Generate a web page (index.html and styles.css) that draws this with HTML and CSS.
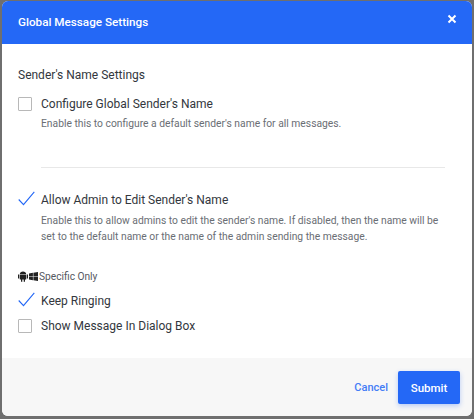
FILE: index.html
```html
<!DOCTYPE html>
<html lang="en">
<head>
<meta charset="utf-8">
<title>Global Message Settings</title>
<link rel="stylesheet" href="styles.css">
</head>
<body>
<div class="dialog">
  <header class="head">
    <h1 class="title">Global Message Settings</h1>
    <svg class="close" viewBox="0 0 10 10" width="10" height="10"><path d="M1.500 1.500l7 7M8.500 1.500l-7 7" stroke="#fff" stroke-width="2"/></svg>
  </header>
  <main class="body">
    <h2 class="section">Sender's Name Settings</h2>
    <div class="row row-first">
      <span class="box"></span>
      <span class="label">Configure Global Sender's Name</span>
    </div>
    <p class="desc d1">Enable this to configure a default sender's name for all messages.</p>
    <hr class="rule">
    <div class="row">
      <svg class="check" viewBox="0 0 17 15" width="17" height="15"><path d="M0.700 8.500L5.500 13.600L16.300 0.800" fill="none" stroke="#2468f6" stroke-width="1.100"/></svg>
      <span class="label">Allow Admin to Edit Sender's Name</span>
    </div>
    <p class="desc d2">Enable this to allow admins to edit the sender's name. If disabled, then the name will be set to the default name or the name of the admin sending the message.</p>
    <div class="specific">
      <svg class="os" viewBox="0 0 10 11" width="10" height="11"><path d="M0 3.500h1.200v4H0zM8.800 3.500h1.200v4H8.800zM1.800 3.400h6.400v5.100H7v2.300H5.700V8.500H4.300v2.300H3V8.500H1.800zM1.800 3C1.900 1.500 3.200.6 5 .6S8.100 1.500 8.200 3z" fill="#222"/></svg>
      <svg class="os" viewBox="0 0 9 9" width="9" height="9"><path d="M0 1.500L3.900.8v3.400H0zM4.400.7L9 0v4.200H4.400zM0 4.700h3.900v3.500L0 7.500zM4.400 4.700H9V9l-4.600-.7z" fill="#222"/></svg>
      <span class="spec-text">Specific Only</span>
    </div>
    <div class="row row-ring">
      <svg class="check" viewBox="0 0 17 15" width="17" height="15"><path d="M0.700 8.500L5.500 13.600L16.300 0.800" fill="none" stroke="#2468f6" stroke-width="1.100"/></svg>
      <span class="label">Keep Ringing</span>
    </div>
    <div class="row row-show">
      <span class="box"></span>
      <span class="label">Show Message In Dialog Box</span>
    </div>
  </main>
  <footer class="foot">
    <a class="cancel">Cancel</a>
    <button class="submit">Submit</button>
  </footer>
</div>
</body>
</html>
```
FILE: styles.css
```css
* { box-sizing: border-box; }
html, body { margin: 0; height: 100%; }
body {
  background: #6f6f6f;
  padding: 1px 2px 3px 2px;
  font-family: Roboto, "Noto Sans", sans-serif;
  color: #33373d;
}
.dialog {
  height: 415px;
  background: #fff;
  border-radius: 6px;
  overflow: hidden;
  display: flex;
  flex-direction: column;
}
.head {
  height: 43px;
  flex: none;
  background: #2468f6;
  display: flex;
  align-items: center;
  justify-content: space-between;
  padding: 0 15px 3px 16px;
}
.title { margin: 0; font-size: 11.700px; font-weight: 500; color: #fff; line-height: 18px; padding-top: 2px; }
.close { margin-top: -5px; }
.body { flex: 1; padding: 22px 16px 0 16px; }
.section { margin: 0; font-size: 12px; font-weight: 400; line-height: 18px; }
.row { display: flex; align-items: center; gap: 9px; height: 18px; }
.row-first { margin-top: 11px; }
.row-ring { margin-top: 8px; }
.row-show { margin-top: 7px; }
.box { width: 14px; height: 14px; border: 1px solid #b8b8b8; border-radius: 1px; background: #fff; flex: none; }
.check { flex: none; margin-right: -3px; margin-top: -3px; }
.label { font-size: 12px; line-height: 18px; }
.desc { margin: 0 0 0 23px; font-size: 10.300px; line-height: 16px; color: #6a6e74; }
.d1 { margin-top: 3px; }
.d2 { margin-top: 4px; margin-right: 8px; }
.rule { margin: 35px 11px 0 23px; border: 0; border-top: 1px solid #e8e8e8; height: 1px; }
.rule + .row { margin-top: 23px; }
.specific { display: flex; align-items: center; gap: 1px; margin-top: 23px; height: 16px; }
.os { flex: none; }
.spec-text { font-size: 10.200px; color: #55595f; }
.foot {
  height: 58px;
  flex: none;
  background: #f7f7f7;
  display: flex;
  align-items: center;
  justify-content: flex-end;
  gap: 10px;
  padding: 1px 12px 0 0;
}
.cancel { font-size: 11px; font-weight: 500; color: #2468f6; opacity: .85; }
.submit {
  width: 62px;
  height: 33px;
  background: #2468f6;
  border: 0;
  border-radius: 2px;
  color: #fff;
  font: 500 11.500px Roboto, sans-serif;
  box-shadow: 0 2px 5px rgba(36,104,246,.3);
}
```
